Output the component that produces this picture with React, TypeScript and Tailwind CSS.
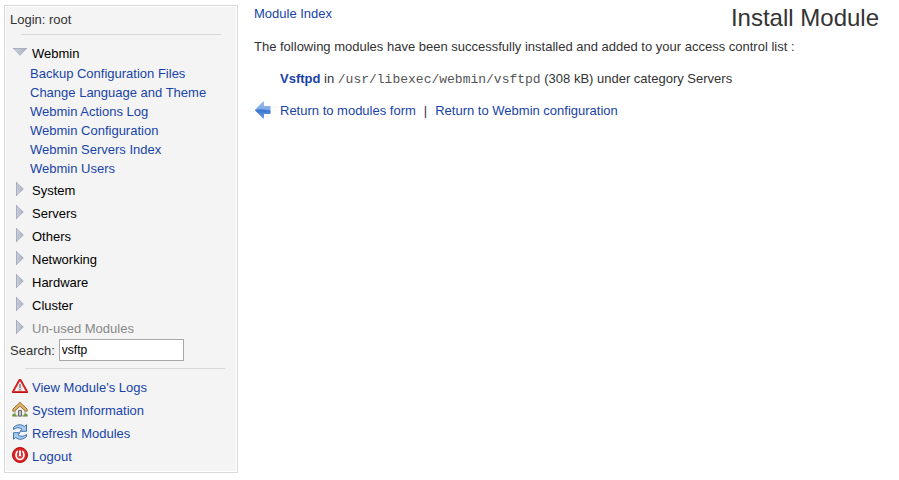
import * as React from "react";

const webminLinks = [
  "Backup Configuration Files",
  "Change Language and Theme",
  "Webmin Actions Log",
  "Webmin Configuration",
  "Webmin Servers Index",
  "Webmin Users",
];

const categories = ["System", "Servers", "Others", "Networking", "Hardware", "Cluster", "Un-used Modules"];

const linkClass = "text-[#1844a8] hover:underline";

const OpenArrow = () => (
  <svg width="16" height="16" viewBox="0 0 16 16" aria-hidden="true">
    <defs>
      <linearGradient id="open-arrow" x1="0" y1="0" x2="1" y2="0">
        <stop offset="0" stopColor="#cfd3de" />
        <stop offset="1" stopColor="#a9afc0" />
      </linearGradient>
    </defs>
    <path d="M1 4h14L8 11.500z" fill="url(#open-arrow)" />
    <path d="M1 4.500h14" stroke="#a7aec2" />
    <path d="M1 4 8 11.300 15 4" fill="none" stroke="#a3aac0" strokeWidth=".7" />
  </svg>
);

const ClosedArrow = () => (
  <svg width="16" height="16" viewBox="0 0 16 16" aria-hidden="true">
    <defs>
      <linearGradient id="closed-arrow" x1="0" y1="0" x2="1" y2="0">
        <stop offset="0" stopColor="#cdd1dc" />
        <stop offset="1" stopColor="#a9afc0" />
      </linearGradient>
    </defs>
    <path d="M4 1v14l7.500-7z" fill="url(#closed-arrow)" />
    <path d="M4.500 1v14" stroke="#a7aec2" />
    <path d="M4 1 11.300 8 4 15" fill="none" stroke="#a3aac0" strokeWidth=".7" />
  </svg>
);

const WarningIcon = () => (
  <svg width="16" height="16" viewBox="0 0 16 16" aria-hidden="true">
    <path d="M7.200 1.500h1.600L15.500 13.500v1H.5v-1z" fill="#e23030" stroke="#c40c0c" />
    <path d="M8 3.200 13.500 13H2.500z" fill="#fdf8f8" />
    <path d="M8 4.500 10.500 9v4H5.500V9z" fill="#dedbdb" />
    <path d="M7.200 6h1.600v4H7.200zM7.200 11h1.600v1.500H7.200z" fill="#8f8a8a" />
  </svg>
);

const HomeIcon = () => (
  <svg width="16" height="16" viewBox="0 0 16 16" aria-hidden="true">
    <path d="M3 8v7h10V8L8 4z" fill="#f0efec" stroke="#a5a29c" />
    <path d="M6.500 15V9.500h3V15z" fill="#c4c4c6" stroke="#6b6b6b" />
    <path d="M8 1.300.8 8.200v2h1.700L8 5.200l5.500 5h1.700v-2z" fill="#dfb26a" stroke="#94672c" strokeWidth=".9" />
    <path d="M0 15.500c0-2 1-3.500 2.300-3s2.500 1.500 2.500 3zM11.200 15.500c0-1.500 1-2.800 2.300-3s2.500 1 2.500 3z" fill="#6f9c4a" />
  </svg>
);

const RefreshIcon = () => (
  <svg width="16" height="16" viewBox="0 0 16 16" aria-hidden="true">
    <g fill="#a9cbf0" stroke="#2f68a8" strokeWidth=".9" strokeLinejoin="round">
      <path d="M1.500 3.500C4.500.3 9.500-.2 12.300 2.500L14.500.8V7.300H8l2.100-2.200C7.800 3.200 4.500 3.300 1.500 5.500z" />
      <path d="M14.500 12.500c-3 3.200-8 3.700-10.800 1L1.500 15.200V8.700H8l-2.100 2.200c2.300 1.900 5.600 1.800 8.600-.4z" />
    </g>
  </svg>
);

const LogoutIcon = () => (
  <svg width="16" height="16" viewBox="0 0 16 16" aria-hidden="true">
    <circle cx="8" cy="8" r="7.500" fill="#dc2222" stroke="#bd0c0c" />
    <ellipse cx="8" cy="8" rx="4" ry="4.500" fill="#e04848" stroke="#fff" strokeWidth="1.700" />
    <path d="M6 2h4v6H6z" fill="#dc2222" />
    <path d="M8 3.500V9" stroke="#fff" strokeWidth="2" />
  </svg>
);

const BackArrow = () => (
  <svg width="18" height="18" viewBox="0 0 18 18" aria-hidden="true">
    <defs>
      <linearGradient id="back-arrow" x1="0" y1="0" x2="0" y2="1">
        <stop offset="0" stopColor="#9dbdec" />
        <stop offset=".5" stopColor="#7ba6e5" />
        <stop offset=".55" stopColor="#3f79d2" />
        <stop offset="1" stopColor="#6d9fe4" />
      </linearGradient>
    </defs>
    <path d="M.8 9 9 .5h1V5h6.500v8H10v4.500H9z" fill="url(#back-arrow)" />
    <path d="M1 9c5-1.500 10-1 15.500 1.500v1C11 11 7 10.500 3.500 11.500z" fill="#3f79d2" />
  </svg>
);

const actions = [
  { label: "View Module's Logs", Icon: WarningIcon },
  { label: "System Information", Icon: HomeIcon },
  { label: "Refresh Modules", Icon: RefreshIcon },
  { label: "Logout", Icon: LogoutIcon },
];

const App = () => {
  const [search, setSearch] = React.useState("vsftp");

  return (
    <div className="flex items-start bg-white font-['Liberation_Sans',Arial,sans-serif] text-[13px] leading-[19px] text-[#333]">
      {/* Left menu */}
      <nav className="ml-1 mt-[5px] w-[234px] shrink-0 border border-[#d9d9d9] bg-white p-px">
        <div className="bg-[#f4f4f4] pb-[3px] pl-1">
          <div className="flex h-6 items-center">Login: root</div>
          <hr className="mb-[7px] ml-[11px] mt-[3px] w-[200px] border-[#d9d9d9]" />

          <button className="flex h-[22px] items-start gap-1 pl-[2px] pt-[2px] text-black">
            <OpenArrow />
            Webmin
          </button>
          <ul className="mb-px pl-5">
            {webminLinks.map((label) => (
              <li key={label}>
                <a href="#" className={linkClass}>{label}</a>
              </li>
            ))}
          </ul>
          {categories.map((label) => (
            <button
              key={label}
              className={`flex h-[23px] items-start gap-1 pl-[2px] pt-[2px] ${label === "Un-used Modules" ? "text-[#888]" : "text-black"}`}
            >
              <ClosedArrow />
              {label}
            </button>
          ))}

          <div className="-mt-px flex items-center gap-1">
            <label htmlFor="search">Search:</label>
            <input
              id="search"
              type="text"
              className="h-[22px] w-[125px] border border-[#a9a9a9] bg-white px-[2px] text-[12px] text-black outline-none"
              value={search}
              onChange={(e) => setSearch(e.target.value)}
            />
          </div>
          <hr className="mb-[7px] ml-[15px] mt-[7px] w-[200px] border-[#d9d9d9]" />

          {actions.map(({ label, Icon }) => (
            <a key={label} href="#" className={`flex h-[23px] items-start gap-1 pl-[2px] pt-[2px] ${linkClass}`}>
              <Icon />
              {label}
            </a>
          ))}
        </div>
      </nav>

      {/* Page body */}
      <main className="flex-1 pl-4 pr-5 pt-1">
        <header className="flex justify-between">
          <a href="#" className={linkClass}>Module Index</a>
          <h1 className="text-[24px] leading-7">Install Module</h1>
        </header>
        <p className="mt-[5px]">
          The following modules have been successfully installed and added to your access control list :
        </p>
        <p className="mt-[13px] pl-[26px]">
          <a href="#" className={`font-bold ${linkClass}`}>Vsftpd</a> in{" "}
          <code className="font-['Liberation_Mono','Courier_New',monospace] text-[#555]">/usr/libexec/webmin/vsftpd</code> (308 kB)
          under category Servers
        </p>
        <div className="mt-3 flex items-start gap-2">
          <BackArrow />
          <a href="#" className={linkClass}>Return to modules form</a>
          <span>|</span>
          <a href="#" className={linkClass}>Return to Webmin configuration</a>
        </div>
      </main>
    </div>
  );
};

export default App;
